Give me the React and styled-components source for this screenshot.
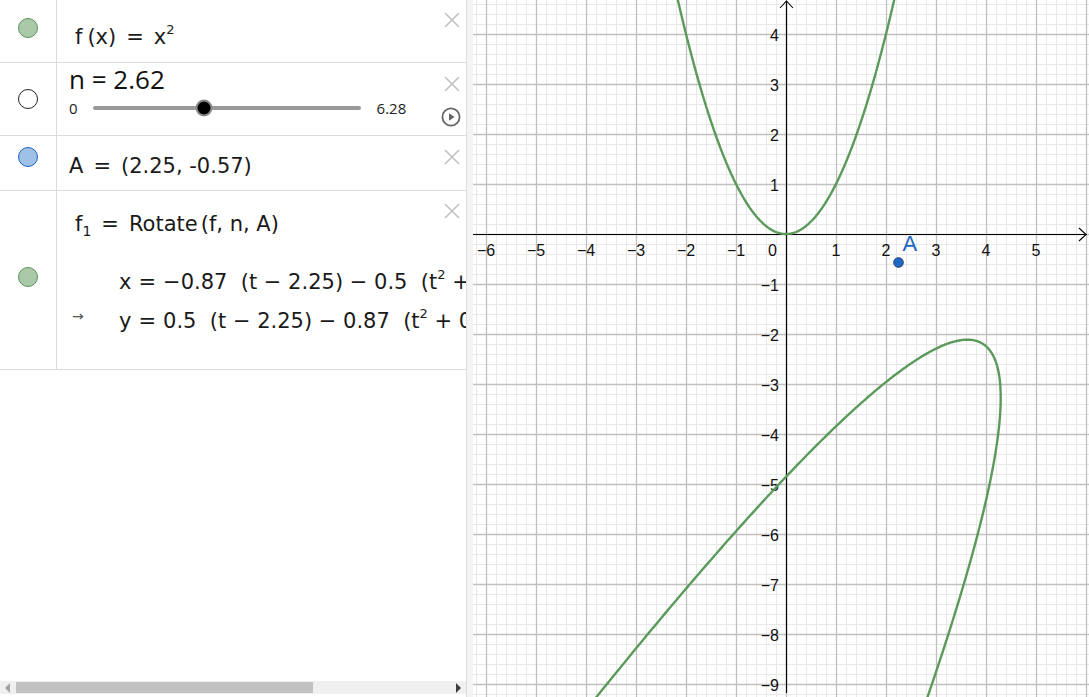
import React from 'react'
import styled, { createGlobalStyle } from 'styled-components'

const GlobalStyle = createGlobalStyle`
  html, body {
    margin: 0;
    padding: 0;
    background: #fff;
    overflow: hidden;
  }
  * { box-sizing: border-box; }
`

const GRAPH_W = 616
const GRAPH_H = 697
const OX = 313
const OY = 234
const UNIT = 50
const N = 2.62
const A = { x: 2.25, y: -0.57 }

const toPx = (x, y) => [OX + x * UNIT, OY - y * UNIT]

const buildPath = (from, to, fn) => {
  const pts = []
  for (let t = from; t <= to; t += 0.02) {
    const [x, y] = fn(t)
    const [px, py] = toPx(x, y)
    pts.push(`${px.toFixed(2)},${py.toFixed(2)}`)
  }
  return 'M' + pts.join(' L')
}

const parabola = buildPath(-2.4, 2.4, t => [t, t * t])
const rotated = buildPath(-8, 8, t => {
  const c = Math.cos(N)
  const s = Math.sin(N)
  const dx = t - A.x
  const dy = t * t - A.y
  return [A.x + c * dx - s * dy, A.y + s * dx + c * dy]
})

const Layout = styled.div`
  display: flex;
  width: 1089px;
  height: 697px;
  overflow: hidden;
  font-family: "DejaVu Sans", sans-serif;
  color: #1a1a1a;
`

const AlgebraPanel = styled.div`
  width: 467px;
  flex: none;
  display: flex;
  flex-direction: column;
  border-right: 1px solid #dcdcdc;
`

const Rows = styled.div`
  flex: 1;
  display: flex;
  flex-direction: column;
`

const Row = styled.div`
  position: relative;
  display: flex;
  height: ${p => p.$h}px;
  border-bottom: 1px solid #dcdcdc;
`

const MarkerCell = styled.div`
  width: 57px;
  flex: none;
  display: flex;
  justify-content: center;
  padding-top: ${p => p.$top}px;
  border-right: 1px solid #dcdcdc;
`

const Marker = styled.div`
  width: 20px;
  height: 20px;
  border-radius: 50%;
  background: ${p => p.$fill};
  border: 1px solid ${p => p.$stroke};
`

const Content = styled.div`
  flex: 1;
  min-width: 0;
  overflow: ${p => (p.$clip ? 'hidden' : 'visible')};
  display: flex;
  flex-direction: column;
  padding: ${p => p.$pad};
`

const Formula = styled.div`
  display: flex;
  align-items: baseline;
  white-space: nowrap;
  font-size: 21px;
  line-height: 26px;
`

const Eq = styled.span`
  margin: 0 ${p => (p.$tight ? 7 : 10)}px;
`

const Sup = styled.sup`
  font-size: 13px;
  position: relative;
  top: -2px;
  line-height: 0;
`

const Sub = styled.sub`
  font-size: 14px;
  line-height: 0;
`

const Close = styled.button`
  position: absolute;
  right: 6px;
  top: ${p => p.$top}px;
  width: 16px;
  height: 16px;
  padding: 0;
  border: 0;
  background: none;
  display: flex;
`

const SliderValue = styled.div`
  font-family: "Open Sans", sans-serif;
  font-size: 26px;
  line-height: 28px;
  color: #111;
`

const SliderRow = styled.div`
  display: flex;
  align-items: center;
  margin-top: 5px;
  font-family: "Open Sans", sans-serif;
  font-size: 15px;
  color: #222;
`

const Track = styled.div`
  position: relative;
  width: 268px;
  height: 4px;
  margin: 0 16px 0 15px;
  background: #999;
  border-radius: 2px;
`

const Thumb = styled.div`
  position: absolute;
  top: 50%;
  left: ${p => p.$pos}%;
  width: 17px;
  height: 17px;
  border-radius: 50%;
  background: #000;
  border: 2px solid #8c8c8c;
  transform: translate(-50%, -50%);
`

const Play = styled.button`
  position: absolute;
  right: 5px;
  bottom: 8px;
  width: 20px;
  height: 20px;
  padding: 0;
  border: 0;
  background: none;
  display: flex;
`

const ParamBlock = styled.div`
  display: flex;
  align-items: center;
  margin-top: 32px;
  margin-left: -18px;
`

const Arrow = styled.div`
  width: 62px;
  flex: none;
  padding-left: 15px;
  padding-top: 28px;
  font-size: 14px;
  color: #555;
`

const ParamLines = styled.div`
  display: flex;
  flex-direction: column;
  gap: 13px;
`

const Scroll = styled.div`
  display: flex;
  align-items: center;
  height: 13px;
  margin-bottom: 3px;
  background: #f0f0f0;
`

const ScrollArrow = styled.div`
  width: 0;
  height: 0;
  border-top: 5px solid transparent;
  border-bottom: 5px solid transparent;
  ${p => p.$dir === 'left'
    ? `border-right: 5px solid #a3a3a3; margin: 0 6px 0 5px;`
    : `border-left: 5px solid #3c3c3c; margin: 0 5px 0 auto;`}
`

const ScrollThumb = styled.div`
  width: 297px;
  height: 11px;
  background: #c1c1c1;
`

const Splitter = styled.div`
  width: 6px;
  flex: none;
  background: #f4f4f4;
`

const GraphView = styled.svg`
  display: block;
  flex: none;
  width: ${GRAPH_W}px;
  height: ${GRAPH_H}px;
  font-family: "Liberation Sans", Arial, sans-serif;
`

const CloseIcon = () => (
  <svg width="16" height="16" viewBox="0 0 16 16">
    <path d="M1 1 L15 15 M15 1 L1 15" stroke="#c2c2c2" strokeWidth="1.6" />
  </svg>
)

const minus = v => (v < 0 ? '\u2212' + Math.abs(v) : String(v))

function Grid() {
  const minors = []
  const majors = []
  for (let px = OX % 10; px <= GRAPH_W; px += 10) {
    const major = (px - OX) % 50 === 0
    const el = (
      <line key={'v' + px} x1={px + 0.5} y1={0} x2={px + 0.5} y2={GRAPH_H}
        stroke={major ? '#c0c0c0' : '#e8e8e8'} strokeWidth={major ? 1.3 : 1} />
    )
    ;(major ? majors : minors).push(el)
  }
  for (let py = OY % 10; py <= GRAPH_H; py += 10) {
    const major = (py - OY) % 50 === 0
    const el = (
      <line key={'h' + py} x1={0} y1={py + 0.5} x2={GRAPH_W} y2={py + 0.5}
        stroke={major ? '#c0c0c0' : '#e8e8e8'} strokeWidth={major ? 1.3 : 1} />
    )
    ;(major ? majors : minors).push(el)
  }
  return <g>{minors}{majors}</g>
}

function Labels() {
  const items = []
  for (let k = -6; k <= 5; k++) {
    if (k === 0) continue
    items.push(
      <text key={'x' + k} x={OX + k * UNIT} y={OY + 22} textAnchor="middle" fontSize="16" fill="#111">
        {minus(k)}
      </text>
    )
  }
  for (let k = -9; k <= 4; k++) {
    if (k === 0) continue
    items.push(
      <text key={'y' + k} x={OX - 7} y={OY - k * UNIT + 7} textAnchor="end" fontSize="16" fill="#111">
        {minus(k)}
      </text>
    )
  }
  items.push(
    <text key="zero" x={OX - 9} y={OY + 22} textAnchor="end" fontSize="16" fill="#111">0</text>
  )
  return <g>{items}</g>
}

function Graph() {
  const [ax, ay] = toPx(A.x, A.y)
  return (
    <GraphView viewBox={`0 0 ${GRAPH_W} ${GRAPH_H}`}>
      <rect width={GRAPH_W} height={GRAPH_H} fill="#fff" />
      <Grid />
      <line x1={0} y1={OY + 0.5} x2={GRAPH_W - 2} y2={OY + 0.5} stroke="#000" strokeWidth="1.2" />
      <path d={`M${GRAPH_W - 10} ${OY - 6} L${GRAPH_W - 3} ${OY + 0.5} L${GRAPH_W - 10} ${OY + 7}`} fill="none" stroke="#000" strokeWidth="1.1" />
      <line x1={OX + 0.5} y1={1} x2={OX + 0.5} y2={GRAPH_H - 4} stroke="#000" strokeWidth="1.2" />
      <path d={`M${OX - 6} 8 L${OX + 0.5} 1 L${OX + 7} 8`} fill="none" stroke="#000" strokeWidth="1.1" />
      <Labels />
      <path d={parabola} fill="none" stroke="#5c9a5c" strokeWidth="2.4" strokeLinejoin="round" />
      <path d={rotated} fill="none" stroke="#5c9a5c" strokeWidth="2.4" strokeLinejoin="round" />
      <circle cx={ax} cy={ay} r="4.8" fill="#1f67c4" stroke="#1c3d6e" strokeWidth="1" />
      <text x={ax + 4} y={ay - 12} fontSize="22" fill="#1f67c4">A</text>
    </GraphView>
  )
}

export default function App() {
  return (
    <>
      <GlobalStyle />
      <Layout>
        <AlgebraPanel>
          <Rows>
            <Row $h={63}>
              <MarkerCell $top={18}>
                <Marker $fill="#a9c9a9" $stroke="#5a955a" />
              </MarkerCell>
              <Content $clip $pad="24px 0 0 18px">
                <Formula>
                  <span>f</span>
                  <span style={{ marginLeft: 5 }}>(x)</span>
                  <Eq>=</Eq>
                  <span>x<Sup>2</Sup></span>
                </Formula>
              </Content>
              <Close $top={12}><CloseIcon /></Close>
            </Row>
            <Row $h={73}>
              <MarkerCell $top={26}>
                <Marker $fill="#fff" $stroke="#222" />
              </MarkerCell>
              <Content $pad="2px 0 0 12px">
                <SliderValue>n = 2.62</SliderValue>
                <SliderRow>
                  <span>0</span>
                  <Track>
                    <Thumb $pos={(2.62 / 6.28) * 100} />
                  </Track>
                  <span>6.28</span>
                </SliderRow>
              </Content>
              <Close $top={13}><CloseIcon /></Close>
              <Play>
                <svg width="20" height="20" viewBox="0 0 20 20">
                  <circle cx="10" cy="10" r="8.6" fill="none" stroke="#666" strokeWidth="1.8" />
                  <path d="M8 6.2 L13.6 10 L8 13.8 Z" fill="#666" />
                </svg>
              </Play>
            </Row>
            <Row $h={55}>
              <MarkerCell $top={11}>
                <Marker $fill="#9fc1e8" $stroke="#1e63c0" />
              </MarkerCell>
              <Content $clip $pad="17px 0 0 12px">
                <Formula>
                  <span>A</span>
                  <Eq>=</Eq>
                  <span>(2.25, -0.57)</span>
                </Formula>
              </Content>
              <Close $top={13}><CloseIcon /></Close>
            </Row>
            <Row $h={179}>
              <MarkerCell $top={76}>
                <Marker $fill="#a9c9a9" $stroke="#5a955a" />
              </MarkerCell>
              <Content $clip $pad="20px 0 0 18px">
                <Formula>
                  <span>f<Sub>1</Sub></span>
                  <Eq>=</Eq>
                  <span>Rotate</span>
                  <span style={{ marginLeft: 3 }}>(f, n, A)</span>
                </Formula>
                <ParamBlock>
                  <Arrow>→</Arrow>
                  <ParamLines>
                    <Formula>
                      <span>x</span><Eq $tight>=</Eq>
                      <span>−0.87&nbsp;&nbsp;(t − 2.25) − 0.5&nbsp;&nbsp;(t<Sup>2</Sup> + 0.57) + 2.25</span>
                    </Formula>
                    <Formula>
                      <span>y</span><Eq $tight>=</Eq>
                      <span>0.5&nbsp;&nbsp;(t − 2.25) − 0.87&nbsp;&nbsp;(t<Sup>2</Sup> + 0.57) − 0.57</span>
                    </Formula>
                  </ParamLines>
                </ParamBlock>
              </Content>
              <Close $top={12}><CloseIcon /></Close>
            </Row>
          </Rows>
          <Scroll>
            <ScrollArrow $dir="left" />
            <ScrollThumb />
            <ScrollArrow $dir="right" />
          </Scroll>
        </AlgebraPanel>
        <Splitter />
        <Graph />
      </Layout>
    </>
  )
}
